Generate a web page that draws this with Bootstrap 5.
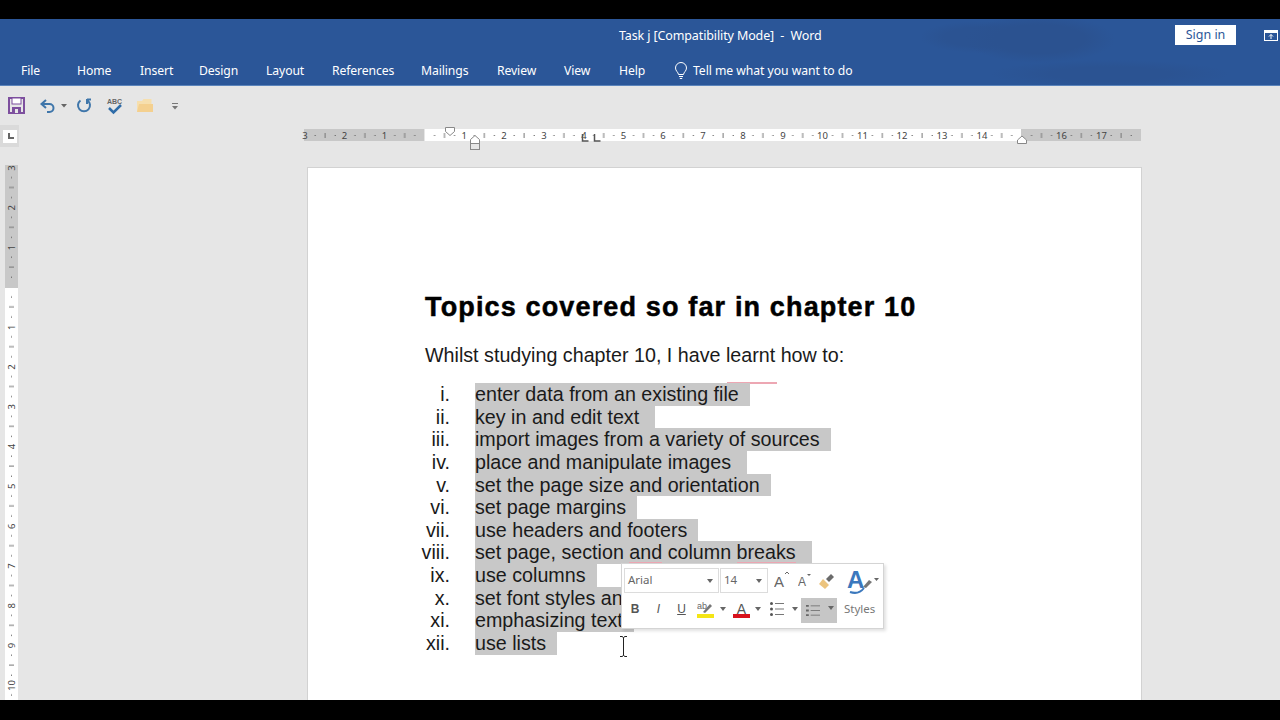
<!doctype html>
<html lang="en">
<head>
<meta charset="utf-8">
<title>Task j [Compatibility Mode] - Word</title>
<link href="https://cdn.jsdelivr.net/npm/bootstrap@5.3.0/dist/css/bootstrap.min.css" rel="stylesheet">
<style>
html,body{height:720px;overflow:hidden;background:#000}
body{font-family:"Noto Sans","Open Sans",sans-serif}
.letterbox-top{height:19px}
.letterbox-bottom{height:20px}
.ribbon{height:67px;color:#fff;border-bottom:1px solid #5b84bb;
 background:
  radial-gradient(ellipse 75px 24px at 1040px 20px,#2b5290 60%,transparent 100%),
  radial-gradient(ellipse 60px 16px at 980px 18px,#2b5392 60%,transparent 100%),
  radial-gradient(ellipse 120px 14px at 1110px 55px,#2b5392 50%,transparent 100%),
  #2b5698}
.title-row{height:33px;font-size:12.5px;position:relative;padding-top:2px}
.title-text{margin-left:619px;letter-spacing:-.12px;white-space:nowrap}
.signin{position:absolute;left:1175px;top:6px;width:61px;height:20px;background:#fff;color:#2b5698;font-size:12.5px;line-height:20px;text-align:center}
.restore{position:absolute;left:1264px;top:11px}
.tabs{height:33px;font-size:12.2px;white-space:nowrap;letter-spacing:-.1px;padding-top:5px}
.tab-file{margin-left:21px;width:56px}
.tab-home{width:63px}.tab-insert{width:59px}.tab-design{width:67px}.tab-layout{width:66px}
.tab-refs{width:89px}.tab-mail{width:76px}.tab-review{width:67px}.tab-view{width:55px}.tab-help{width:55px}
.tell{gap:5px;letter-spacing:-.05px}
.workspace{background:#e6e6e6;height:614px;overflow:hidden}
.qat{height:39px;padding-left:8px}
.qat svg{display:block}
.q-undo{margin-left:15px}.q-drop{margin-left:4px}.q-redo{margin-left:8px}.q-spell{margin-left:14px}.q-folder{margin-left:13px}.q-more{margin-left:19px}
.left-col{width:300px;flex:none}
.tab-sel{width:19px;height:22px;background:#dadada;padding:5px 2px 4px 3px}
.tab-sel div{background:#fff;height:13px;padding:3px 0 0 5px}
.tab-sel i{display:block;width:6px;height:6px;border-left:2px solid #666;border-bottom:2px solid #666}
.vruler{display:block;margin:18px 0 0 5px}
.hruler{display:block;margin-left:0}
.sheet{width:835px;margin:17px 0 0 7px;background:#fff;border:1px solid #d2d2d2;border-bottom:0;height:534px;position:relative;color:#1a1a1a;
 font-family:"Liberation Sans",Arial,sans-serif;font-size:19.7px;padding-top:123px}
.doc-title{font-size:27px;font-weight:700;color:#000;margin:0 0 0 117px;line-height:32px;letter-spacing:1.15px;-webkit-text-stroke:.5px #000;white-space:nowrap}
.intro{margin:20px 0 0 117px;line-height:24px;white-space:nowrap}
.pink-top{height:2px;width:50px;margin:15px 0 0 419px;background:#eda7b3}
.items{margin:-1px 0 0 0;padding:0;list-style:none;line-height:22.65px}
.items li{display:flex;height:22.65px;white-space:nowrap}
.num{width:142px;flex:none;text-align:right}
.sel{margin-left:25px;background:#c8c8c8;padding-right:11px}
.sel.wide{padding-right:16px}
.sq{border-bottom:2px solid #eda7b3;line-height:20px;display:inline-block}
.minibar{position:absolute;left:313px;top:395px;width:263px;height:66px;background:#fff;border:1px solid #d4d4d4;box-shadow:2px 2px 3px rgba(0,0,0,.12);font-family:"Noto Sans",sans-serif;color:#666;font-size:11.5px}
.combo{border:1px solid #dcdcdc;height:25px;line-height:22px;padding-left:3px;position:relative}
.combo.font{width:95px;margin-left:2px}.combo.size{width:48px;margin-left:1px}
.combo::after{content:"";position:absolute;right:5px;top:10px;border:3.500px solid transparent;border-top:4px solid #666}
.mini-row1{padding-top:2px;height:31px}
.mini-row2{height:27px}
.mini-row2 b,.mini-row2 em,.mini-row2 u{font-family:"Liberation Sans",sans-serif;font-size:12px;width:23px;text-align:center;color:#555}
.mini-row2 b{width:24px;margin-left:1px}
.m-a1{margin-left:6px}.m-a2{margin-left:8px}.m-br{margin-left:6px}.m-st{margin-left:11px}
.m-hi{margin-left:4px}.m-c1{margin-left:6px}.m-fc{margin-left:7px}.m-c2{margin-left:5px}.m-bl{margin-left:9px}.m-c3{margin-left:8px}.m-nu{margin-left:3px}
.caret-d{width:0;height:0;flex:none;border:3px solid transparent;border-top:4px solid #666;margin-top:3px}
.num-on{background:#c6c6c6;width:36px;height:25px;padding:5px 3px 0 5px;flex:none;margin-top:4px}
.styles-lbl{font-size:11.5px;color:#777;margin-left:7px}
.ibeam{position:absolute;left:311px;top:468px}
</style>
</head>
<body>
<div class="letterbox-top"></div>
<header class="ribbon">
  <div class="title-row d-flex align-items-center">
    <div class="title-text">Task j [Compatibility Mode]&nbsp; -&nbsp; Word</div>
    <div class="signin">Sign in</div>
    <svg class="restore" width="14" height="11" viewBox="0 0 14 11"><rect x=".5" y=".5" width="13" height="10" fill="none" stroke="#fff"/><rect x="1" y="1" width="12" height="2" fill="#fff"/><path d="M7 9V4.500M5 6.500l2-2 2 2" fill="none" stroke="#fff"/></svg>
  </div>
  <nav class="tabs d-flex align-items-center">
    <span class="tab-file">File</span><span class="tab-home">Home</span><span class="tab-insert">Insert</span><span class="tab-design">Design</span><span class="tab-layout">Layout</span><span class="tab-refs">References</span><span class="tab-mail">Mailings</span><span class="tab-review">Review</span><span class="tab-view">View</span><span class="tab-help">Help</span>
    <span class="tell d-flex align-items-center">
      <svg width="14" height="18" viewBox="0 0 14 18"><path d="M4.500 12.500C4.200 10 1.500 9 1.500 6a5.500 5.500 0 0 1 11 0c0 3-2.700 4-3 6.500zM5 14.500h4M5.800 16.500h2.400" fill="none" stroke="#fff" stroke-width="1"/></svg>
      Tell me what you want to do
    </span>
  </nav>
</header>
<main class="workspace">
  <div class="qat d-flex align-items-center">
    <svg width="17" height="17" viewBox="0 0 17 17"><path d="M1 1h15v15H1z" fill="none" stroke="#7d4f9e" stroke-width="2"/><rect x="4" y="1" width="9" height="6" fill="#fff" stroke="#7d4f9e"/><rect x="4" y="10" width="9" height="6" fill="#7d4f9e"/><rect x="7" y="12" width="3" height="4" fill="#e6e6e6"/></svg>
    <svg class="q-undo" width="16" height="16" viewBox="0 0 16 16"><path d="M6 2 1.500 6 6 10M2 6h7.500a4 4 0 0 1 0 8H7" fill="none" stroke="#3f76aa" stroke-width="2"/></svg>
    <svg class="q-drop" width="8" height="5" viewBox="0 0 8 5"><path d="M1 1h6L4 4.500z" fill="#666"/></svg>
    <svg class="q-redo" width="16" height="16" viewBox="0 0 16 16"><path d="M4.500 2.500a6 6 0 1 0 7 0M11 1v5M11 1.500H15" fill="none" stroke="#3f76aa" stroke-width="2"/></svg>
    <svg class="q-spell" width="17" height="18" viewBox="0 0 17 18"><text x="8.500" y="7" font-family="Liberation Sans" font-size="7" font-weight="700" text-anchor="middle" fill="#666">ABC</text><path d="M3 11l4.500 4.500L15 8" fill="none" stroke="#2f6ca8" stroke-width="2.500"/></svg>
    <svg class="q-folder" width="17" height="15" viewBox="0 0 17 15"><path d="M1 14V3h5l1.500-2h8v13z" fill="#f6dfae"/><path d="M1 14l2-8h14v8z" fill="#f4d08f"/></svg>
    <svg class="q-more" width="6" height="8" viewBox="0 0 6 8"><path d="M0 1h6v1H0z" fill="#777"/><path d="M0 4h6L3 7.500z" fill="#777"/></svg>
  </div>
  <div class="d-flex">
    <div class="left-col">
      <div class="tab-sel"><div><i></i></div></div>
      <svg class="vruler" width="13" height="535" viewBox="0 0 13 535">
        <defs><pattern id="vt" width="13" height="39.8" patternUnits="userSpaceOnUse" y="2.500"><rect x="6" y="9.500" width="1" height="1.200" fill="#666"/><rect x="4" y="19.500" width="5" height="1" fill="#777"/><rect x="6" y="29.500" width="1" height="1.200" fill="#666"/></pattern></defs>
        <rect width="13" height="123" fill="#c8c8c8"/><rect y="123" width="13" height="412" fill="#fff"/><rect width="13" height="535" fill="url(#vt)"/>
        <g font-family="Noto Sans" font-size="9.500" fill="#444" text-anchor="middle">
          <text transform="translate(10 3) rotate(-90)">3</text><text transform="translate(10 42.800) rotate(-90)">2</text><text transform="translate(10 82.600) rotate(-90)">1</text>
          <text transform="translate(10 162.200) rotate(-90)">1</text><text transform="translate(10 202) rotate(-90)">2</text><text transform="translate(10 241.800) rotate(-90)">3</text><text transform="translate(10 281.600) rotate(-90)">4</text><text transform="translate(10 321.400) rotate(-90)">5</text><text transform="translate(10 361.200) rotate(-90)">6</text><text transform="translate(10 401) rotate(-90)">7</text><text transform="translate(10 440.800) rotate(-90)">8</text><text transform="translate(10 480.600) rotate(-90)">9</text><text transform="translate(10 520.400) rotate(-90)">10</text>
        </g>
      </svg>
    </div>
    <div class="flex-grow-1">
      <svg class="hruler" width="860" height="25" viewBox="300 125 860 25">
        <defs><pattern id="ht" width="39.8" height="25" patternUnits="userSpaceOnUse" x="424.500" y="125"><rect x="9.500" y="10" width="1.200" height="1" fill="#666"/><rect x="19.500" y="8" width="1" height="5" fill="#777"/><rect x="29.500" y="10" width="1.200" height="1" fill="#666"/></pattern></defs>
        <rect x="304" y="129" width="120" height="12" fill="#c8c8c8"/><rect x="425" y="129" width="596" height="12" fill="#fff"/><rect x="1021" y="129" width="120" height="12" fill="#c8c8c8"/>
        <rect x="304" y="129" width="837" height="12" fill="url(#ht)"/>
        <g font-family="Noto Sans" font-size="9.500" fill="#444" text-anchor="middle">
          <text x="305" y="139">3</text><text x="344.500" y="139">2</text><text x="384.500" y="139">1</text><text x="464.300" y="139">1</text><text x="504" y="139">2</text><text x="544" y="139">3</text><text x="584" y="139">4</text><text x="623.500" y="139">5</text><text x="663" y="139">6</text><text x="703" y="139">7</text><text x="743" y="139">8</text><text x="783" y="139">9</text><text x="822.500" y="139">10</text><text x="862.500" y="139">11</text><text x="902" y="139">12</text><text x="942" y="139">13</text><text x="982" y="139">14</text><text x="1061.500" y="139">16</text><text x="1101.500" y="139">17</text>
        </g>
        <path d="M445.500 127.500h9v4l-4.500 4-4.500-4z" fill="#fff" stroke="#888"/>
        <path d="M470.500 143.500v-4l4.500-4 4.500 4v4z" fill="#fff" stroke="#888"/><rect x="470.500" y="143.500" width="9" height="6" fill="#e6e6e6" stroke="#888"/>
        <path d="M582.500 134v7h6M594.500 134v7h6" fill="none" stroke="#555" stroke-width="1.500"/>
        <path d="M1017.500 143.500v-3.500l4.500-4 4.500 4v3.500z" fill="#fff" stroke="#888"/>
      </svg>
      <article class="sheet">
        <h1 class="doc-title">Topics covered so far in chapter 10</h1>
        <p class="intro">Whilst studying chapter 10, I have learnt how to:</p>
        <div class="pink-top"></div>
        <ol class="items">
          <li><span class="num">i.</span><span class="sel">enter data from an existing file</span></li>
          <li><span class="num">ii.</span><span class="sel wide">key in and edit text</span></li>
          <li><span class="num">iii.</span><span class="sel">import images from a variety of sources</span></li>
          <li><span class="num">iv.</span><span class="sel wide">place and manipulate images</span></li>
          <li><span class="num">v.</span><span class="sel">set the page size and orientation</span></li>
          <li><span class="num">vi.</span><span class="sel">set page margins</span></li>
          <li><span class="num">vii.</span><span class="sel">use headers and footers</span></li>
          <li><span class="num">viii.</span><span class="sel wide">set page, section <span class="sq">and</span> column <span class="sq">breaks</span></span></li>
          <li><span class="num">ix.</span><span class="sel">use columns</span></li>
          <li><span class="num">x.</span><span class="sel">set font styles and</span></li>
          <li><span class="num">xi.</span><span class="sel">emphasizing text</span></li>
          <li><span class="num">xii.</span><span class="sel">use lists</span></li>
        </ol>
        <div class="minibar">
          <div class="mini-row1 d-flex align-items-center">
            <div class="combo font">Arial</div><div class="combo size">14</div>
            <svg class="m-a1" width="16" height="20" viewBox="0 0 16 20"><text x="0" y="16" font-family="Liberation Sans" font-size="15" fill="#666">A</text><path d="M11 3l2-2 2 2" fill="none" stroke="#666"/></svg>
            <svg class="m-a2" width="14" height="20" viewBox="0 0 14 20"><text x="0" y="15" font-family="Liberation Sans" font-size="12" fill="#666">A</text><path d="M9 3h4l-2 2z" fill="#666"/></svg>
            <svg class="m-br" width="18" height="18" viewBox="0 0 18 18"><path d="M1 12l4-5 6 6-4 4z" fill="#ecc47e"/><path d="M8 7l5-5 3 3-5 5z" fill="#6b6b6b"/></svg>
            <svg class="m-st" width="32" height="30" viewBox="0 0 32 30"><text x="0" y="22" font-family="Liberation Sans" font-size="24" font-weight="700" fill="#3b78bd">A</text><path d="M3 26c6 2 11 0 14-4" fill="none" stroke="#3b78bd" stroke-width="2"/><path d="M16 21l6-7 3 2-6 6z" fill="#777"/><path d="M27 12h5l-2.500 3z" fill="#666"/></svg>
          </div>
          <div class="mini-row2 d-flex align-items-center">
            <b>B</b><em>I</em><u>U</u>
            <svg class="m-hi" width="17" height="18" viewBox="0 0 17 18"><text x="0" y="9" font-family="Liberation Sans" font-size="9" fill="#666">ab</text><path d="M6 12l7-8 2 2-7 7z" fill="#777"/><rect y="14" width="17" height="4" fill="#f4e515"/></svg>
            <span class="caret-d m-c1"></span>
            <svg class="m-fc" width="17" height="18" viewBox="0 0 17 18"><text x="8.500" y="14" text-anchor="middle" font-family="Liberation Sans" font-size="14" fill="#555">A</text><rect y="14" width="17" height="4" fill="#d8111b"/></svg>
            <span class="caret-d m-c2"></span>
            <svg class="m-bl" width="14" height="16" viewBox="0 0 14 16"><path d="M5 2.500h9M5 8h9M5 13.500h9" stroke="#777"/><circle cx="1.500" cy="2.500" r="1.500" fill="#555"/><circle cx="1.500" cy="8" r="1.500" fill="#555"/><circle cx="1.500" cy="13.500" r="1.500" fill="#555"/></svg>
            <span class="caret-d m-c3"></span>
            <span class="num-on d-flex gap-2 m-nu"><svg width="15" height="15" viewBox="0 0 15 15"><path d="M5 2.500h10M5 7.500h10M5 12.500h10" stroke="#777"/><path d="M0 2.500h3M0 7.500h3M0 12.500h3" stroke="#666" stroke-width="2"/></svg><span class="caret-d"></span></span>
            <span class="styles-lbl">Styles</span>
          </div>
        </div>
        <svg class="ibeam" width="9" height="21" viewBox="0 0 9 21"><path d="M1 .5h2.500L4.500 2l1-1.500H8M4.500 2v17M1 20.500h2.500l1-1.500 1 1.500H8" fill="none" stroke="#222"/></svg>
      </article>
    </div>
  </div>
</main>
<div class="letterbox-bottom"></div>
<script src="https://cdn.jsdelivr.net/npm/bootstrap@5.3.0/dist/js/bootstrap.bundle.min.js"></script>
</body>
</html>
